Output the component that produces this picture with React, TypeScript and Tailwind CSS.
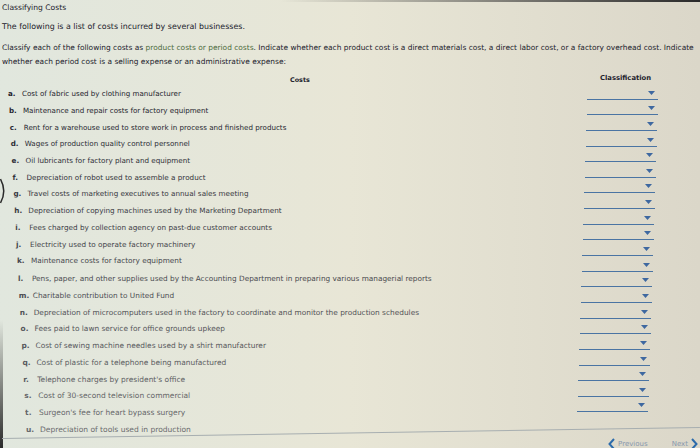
import React from "react";

const items: [string, string][] = [
  ["a.", "Cost of fabric used by clothing manufacturer"],
  ["b.", "Maintenance and repair costs for factory equipment"],
  ["c.", "Rent for a warehouse used to store work in process and finished products"],
  ["d.", "Wages of production quality control personnel"],
  ["e.", "Oil lubricants for factory plant and equipment"],
  ["f.", "Depreciation of robot used to assemble a product"],
  ["g.", "Travel costs of marketing executives to annual sales meeting"],
  ["h.", "Depreciation of copying machines used by the Marketing Department"],
  ["i.", "Fees charged by collection agency on past-due customer accounts"],
  ["j.", "Electricity used to operate factory machinery"],
  ["k.", "Maintenance costs for factory equipment"],
  ["l.", "Pens, paper, and other supplies used by the Accounting Department in preparing various managerial reports"],
  ["m.", "Charitable contribution to United Fund"],
  ["n.", "Depreciation of microcomputers used in the factory to coordinate and monitor the production schedules"],
  ["o.", "Fees paid to lawn service for office grounds upkeep"],
  ["p.", "Cost of sewing machine needles used by a shirt manufacturer"],
  ["q.", "Cost of plastic for a telephone being manufactured"],
  ["r.", "Telephone charges by president's office"],
  ["s.", "Cost of 30-second television commercial"],
  ["t.", "Surgeon's fee for heart bypass surgery"],
  ["u.", "Depreciation of tools used in production"],
];

function Dropdown({ i }: { i: number }) {
  return (
    <div
      className="relative h-[15.65px] w-[71px] border-b-[1.5px] border-[#4a74a3]"
      style={{ marginLeft: `${-i * 0.5}px` }}
    >
      <svg
        className="absolute right-[3px] bottom-[4px]"
        width="7"
        height="4"
        viewBox="0 0 7 4"
      >
        <polygon points="0,0 7,0 3.5,4" fill="#3e68a0" />
      </svg>
    </div>
  );
}

export default function App() {
  return (
    <div className="relative w-[700px] h-[448px] overflow-hidden bg-linear-to-r from-[#e1e7de] via-[#e8e6d6] to-[#dbd7c9] font-['DejaVu_Sans',sans-serif] text-[#22222c]">
      <div className="absolute top-0 right-0 h-[2px] w-[420px] bg-linear-to-r from-transparent to-[#2a2a2a]" />
      <svg className="absolute left-0 top-[178px]" width="8" height="26" viewBox="0 0 8 26">
        <path d="M0.5,1 Q7,13 0.5,25" stroke="#2a2a2a" strokeWidth="1.5" fill="none" />
      </svg>
      <div className="absolute left-0 top-[320px] bottom-0 w-[3px] bg-linear-to-b from-transparent to-[#2b2b2b]" />

      <div className="flex flex-col pl-[2px] pt-[3px]">
        <div className="text-[7.6px] leading-[10px]">Classifying Costs</div>
        <p className="mt-[9px] text-[7.9px] leading-[10px]">
          The following is a list of costs incurred by several businesses.
        </p>
        <p className="mt-[9px] text-[7.45px] leading-[14px]">
          <span>Classify each of the following costs as </span>
          <span className="text-[#4d6b3c]">product costs or period costs</span>
          <span>
            . Indicate whether each product cost is a direct materials cost, a direct labor cost, or a
            factory overhead cost. Indicate whether each period cost is a selling expense or an
            administrative expense:
          </span>
        </p>

        <div className="flex">
          <div className="flex w-[585px] flex-col">
            <div className="mt-[5px] h-[12px] pl-[288px] text-[6.4px] font-bold leading-[12px]">Costs</div>
            {items.map(([l, t], i) => (
              <div
                key={l}
                className="flex h-[16.75px] items-center whitespace-nowrap"
                style={{
                  paddingLeft: `${6 + i * 0.9}px`,
                  opacity: 1 - i * 0.018,
                  fontSize: `${7.1 + i * 0.022}px`,
                }}
              >
                <span className="w-[14px] shrink-0 font-bold">{l}</span>
                <span>{t}</span>
              </div>
            ))}
          </div>
          <div className="flex flex-col">
            <div className="mt-[4px] h-[11px] pl-[13px] text-[6.8px] font-bold leading-[11px]">Classification</div>
            {items.map(([l], i) => (
              <Dropdown key={l} i={i} />
            ))}
          </div>
        </div>

        <div className="h-0 origin-left -rotate-[0.9deg] border-t border-[#a7aeb0]" />
        <div className="-mt-[1px] flex justify-end gap-[24px] pr-[2px] text-[7px] leading-[10px]">
          <div className="flex items-center gap-[3px] text-[#8797ad]">
            <svg width="7" height="12" viewBox="0 0 7 12">
              <path d="M6,1 L1.5,6 L6,11" stroke="#2c6bab" strokeWidth="2" fill="none" />
            </svg>
            <span>Previous</span>
          </div>
          <div className="flex items-center gap-[3px] text-[#8797ad]">
            <span>Next</span>
            <svg width="7" height="12" viewBox="0 0 7 12">
              <path d="M1,1 L5.5,6 L1,11" stroke="#2c6bab" strokeWidth="2" fill="none" />
            </svg>
          </div>
        </div>
      </div>
    </div>
  );
}
